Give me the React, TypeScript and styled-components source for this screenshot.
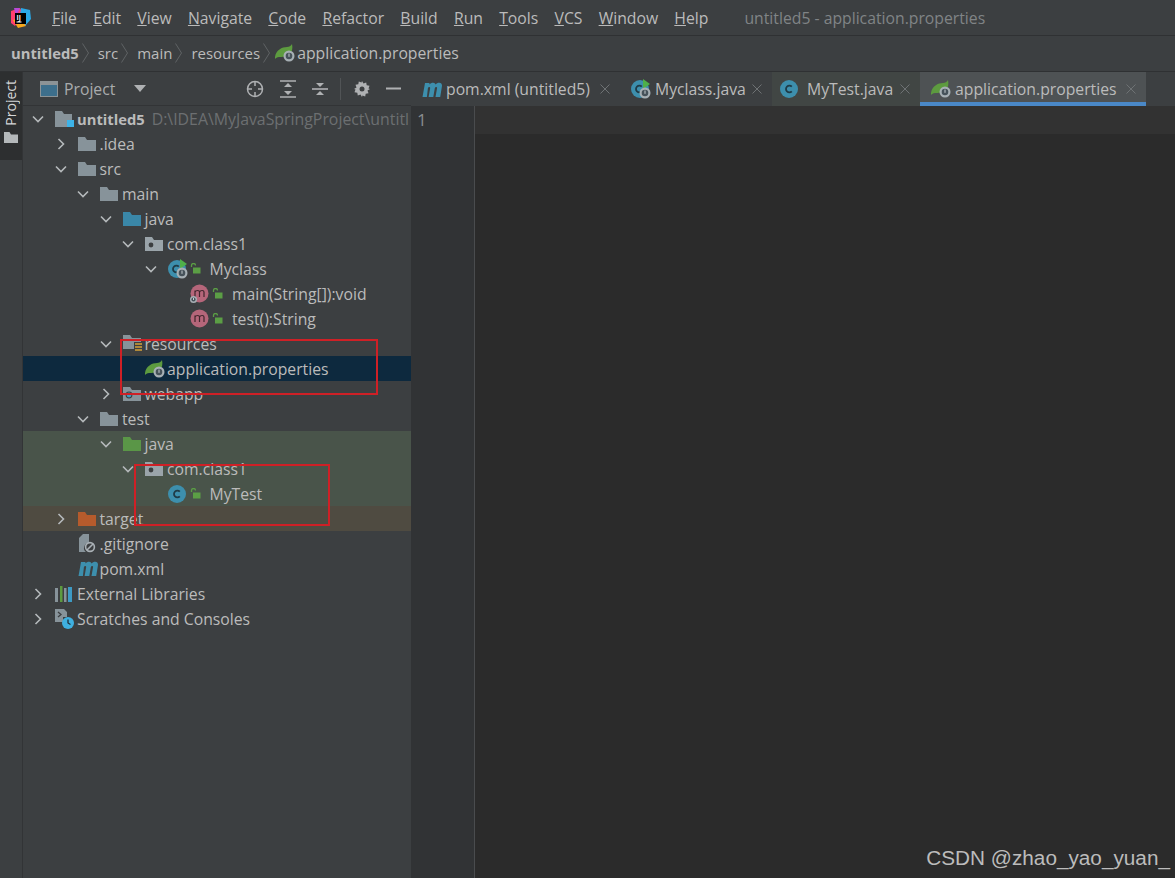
import React from 'react';
import styled, { createGlobalStyle } from 'styled-components';

const GlobalStyle = createGlobalStyle`
  html, body { margin: 0; padding: 0; background: #3c3f41; }
  body { font-family: "Open Sans", "Noto Sans", sans-serif; }
`;

const menuItems: [string, string][] = [
  ['F', 'ile'], ['E', 'dit'], ['V', 'iew'], ['N', 'avigate'], ['C', 'ode'], ['R', 'efactor'],
  ['B', 'uild'], ['R', 'un'], ['T', 'ools'], ['V', 'CS'], ['W', 'indow'], ['H', 'elp'],
];

const Folder = ({ color = '#87939a' }: { color?: string }) => (
  <svg width="18" height="14" viewBox="0 0 18 14">
    <path d="M0 0h7l2 3h9v11H0z" fill={color} />
  </svg>
);

const ModuleFolder = () => (
  <svg width="19" height="18" viewBox="0 0 19 18">
    <path d="M0 1h7l2 3h8v8h-5v5H0z" fill="#87939a" />
    <rect x="12" y="10" width="7" height="7" fill="#3db3e8" />
  </svg>
);

const PackageFolder = () => (
  <svg width="18" height="14" viewBox="0 0 18 14">
    <path d="M0 0h7l2 3h9v11H0z" fill="#9aa4aa" />
    <circle cx="6" cy="8" r="2.4" fill="#3c3f41" />
  </svg>
);

const ResourcesFolder = () => (
  <svg width="20" height="18" viewBox="0 0 20 18">
    <path d="M0 0h7l2 3h9v11H0z" fill="#87939a" />
    <rect x="11" y="7" width="9" height="11" fill="#3c3f41" />
    <path d="M12 9h7M12 12h7M12 15h7" stroke="#d5a238" strokeWidth="1.6" />
  </svg>
);

const WebFolder = () => (
  <svg width="18" height="14" viewBox="0 0 18 14">
    <path d="M0 0h7l2 3h9v11H0z" fill="#87939a" />
    <circle cx="6" cy="8" r="3.4" fill="#3c3f41" />
    <circle cx="6" cy="8" r="2.4" fill="#3d9ac4" />
  </svg>
);

const Gear = ({ x, y, r = 5 }: { x: number; y: number; r?: number }) => (
  <g>
    <circle cx={x} cy={y} r={r} fill="#a7b0b5" />
    <circle cx={x} cy={y} r={r * 0.6} fill="#46525a" />
    <path d={`M${x} ${y - r * 0.45}v${r * 0.6}`} stroke="#c4cbcf" strokeWidth="1" />
  </g>
);

const SpringLeaf = () => (
  <svg width="22" height="18" viewBox="0 0 22 18">
    <path d="M0 13C1 6 7 3 12 3c2 0 4-1 5-3 1 4 0 8-2 10-3 3-8 3-11 3-2 0-3 1-4 2z" fill="#5d9b3f" />
    <Gear x={14} y={12} r={5.5} />
  </svg>
);

const ClassBadge = () => (
  <svg width="18" height="18" viewBox="0 0 18 18">
    <circle cx="9" cy="9" r="9" fill="#3d8fad" />
    <path d="M11.800 6.600a3.400 3.400 0 1 0 0 4.800" fill="none" stroke="#1f3b47" strokeWidth="1.800" />
  </svg>
);

const SpringClass = () => (
  <svg width="22" height="20" viewBox="0 0 22 20">
    <circle cx="9" cy="10" r="9" fill="#3d8fad" />
    <path d="M10.800 7.600a3.400 3.400 0 1 0 0 4.800" fill="none" stroke="#1f3b47" strokeWidth="1.800" />
    <path d="M12 0l7 5-7 5z" fill="#4fb04a" />
    <Gear x={14} y={14} r={5.5} />
  </svg>
);

const MethodBadge = ({ gear }: { gear?: boolean }) => (
  <svg width="20" height="20" viewBox="0 0 20 20">
    <circle cx="9.500" cy="9.500" r="9" fill="#b5667a" />
    <path d="M5 13V6.500M5 8c1-2 4.500-2 4.500 0v5M9.500 8c1-2 4.500-2 4.500 0v5" fill="none" stroke="#40252c" strokeWidth="1.200" />
    {gear && <Gear x={3.500} y={15.500} r={3.500} />}
  </svg>
);

const Lock = () => (
  <svg width="11" height="11" viewBox="0 0 11 11">
    <path d="M1.500 4V2.500a2 2 0 0 1 4 0" fill="none" stroke="#5b9e45" strokeWidth="1.300" />
    <rect x="3" y="4.500" width="7.500" height="6" fill="#5b9e45" />
  </svg>
);

const MavenMark = () => (
  <svg width="20" height="15" viewBox="0 0 20 15">
    <path
      d="M0.500 15L3 1h4.500l-.2 1.500C8.500 1.200 10 .6 11.200.7c1.200.1 2 .8 2.300 1.800C14.700 1.200 16 .6 17.300.7c2 .2 3 1.500 2.600 3.700L18.200 15h-4.700l1.500-8.600c.2-1-.1-1.500-.7-1.500-.7 0-1.200.5-1.500 1.300L11.300 15H6.600l1.500-8.600c.2-1-.1-1.500-.7-1.500-.7 0-1.200.5-1.500 1.300L4.900 15z"
      fill="#3d8fad"
    />
  </svg>
);

const GitIgnoreIcon = () => (
  <svg width="18" height="19" viewBox="0 0 18 19">
    <path d="M1 4l4-4h6v9a5 5 0 0 0-3 9H1z" fill="#87939a" />
    <circle cx="12" cy="13" r="4.400" fill="none" stroke="#a9b0b5" strokeWidth="1.600" />
    <path d="M9 16l6-6" stroke="#a9b0b5" strokeWidth="1.600" />
  </svg>
);

const LibrariesIcon = () => (
  <svg width="18" height="16" viewBox="0 0 18 16">
    <rect x="0" y="2" width="3" height="14" fill="#87939a" />
    <rect x="5" y="0" width="2.500" height="16" fill="#5d9b3f" />
    <rect x="9" y="2" width="2.500" height="14" fill="#87939a" />
    <rect x="13" y="1" width="4" height="15" fill="#3d9ac4" />
  </svg>
);

const ScratchesIcon = () => (
  <svg width="20" height="20" viewBox="0 0 20 20">
    <path d="M0 0h9l3 3v5H8v5H0z" fill="#87939a" />
    <path d="M3 3l3 2.500L3 8" fill="none" stroke="#3c3f41" strokeWidth="1.300" />
    <circle cx="13" cy="14" r="6" fill="#3fb0e0" />
    <path d="M13 10.500V14l2.500 1.500" fill="none" stroke="#1d2f38" strokeWidth="1.300" />
  </svg>
);

const AppLogo = () => (
  <svg width="20" height="20" viewBox="0 0 20 20">
    <path d="M0 3l9-3 3 6-8 12-4-3z" fill="#ff3f6f" />
    <path d="M10 0l9 2 1 9-6 7-6-3z" fill="#2aa8e6" />
    <path d="M2 12l5 8 8-2-6-8z" fill="#f7a81c" />
    <path d="M3 0l6 0-4 9z" fill="#b84ad8" />
    <rect x="4" y="5" width="11" height="11" fill="#000" />
    <text x="5.500" y="11.500" fontSize="6.500" fontWeight="700" fontFamily="Open Sans" fill="#fff">IJ</text>
    <rect x="5.500" y="13.500" width="5" height="1" fill="#fff" />
  </svg>
);

const Chevron = ({ open }: { open: boolean }) => (
  <svg width="12" height="12" viewBox="0 0 12 12">
    <path d={open ? 'M1 3.500l5 5 5-5' : 'M3.500 1l5 5-5 5'} fill="none" stroke="#b5b9bb" strokeWidth="1.600" />
  </svg>
);

const CrumbArrow = () => (
  <CrumbArrowBox width="7" height="20" viewBox="0 0 7 20">
    <path d="M0.500 0.500l6 9.500-6 9.500" fill="none" stroke="#5f6365" strokeWidth="1" />
  </CrumbArrowBox>
);

const Close = () => (
  <svg width="10" height="10" viewBox="0 0 10 10">
    <path d="M0.500 0.500l9 9M9.500 0.500l-9 9" stroke="#6e7274" strokeWidth="1" />
  </svg>
);

type Row = {
  depth: number;
  open?: boolean;
  icon: React.ReactNode;
  label: string;
  hint?: string;
  bold?: boolean;
  tone?: 'selected' | 'test' | 'excluded';
  locked?: boolean;
};

const rows: Row[] = [
  { depth: 0, open: true, icon: <ModuleFolder />, label: 'untitled5', bold: true, hint: 'D:\\IDEA\\MyJavaSpringProject\\untitl' },
  { depth: 1, open: false, icon: <Folder />, label: '.idea' },
  { depth: 1, open: true, icon: <Folder />, label: 'src' },
  { depth: 2, open: true, icon: <Folder />, label: 'main' },
  { depth: 3, open: true, icon: <Folder color="#3a87a8" />, label: 'java' },
  { depth: 4, open: true, icon: <PackageFolder />, label: 'com.class1' },
  { depth: 5, open: true, icon: <SpringClass />, label: 'Myclass', locked: true },
  { depth: 6, icon: <MethodBadge gear />, label: 'main(String[]):void', locked: true },
  { depth: 6, icon: <MethodBadge />, label: 'test():String', locked: true },
  { depth: 3, open: true, icon: <ResourcesFolder />, label: 'resources' },
  { depth: 4, icon: <SpringLeaf />, label: 'application.properties', tone: 'selected' },
  { depth: 3, open: false, icon: <WebFolder />, label: 'webapp' },
  { depth: 2, open: true, icon: <Folder />, label: 'test' },
  { depth: 3, open: true, icon: <Folder color="#5a9647" />, label: 'java', tone: 'test' },
  { depth: 4, open: true, icon: <PackageFolder />, label: 'com.class1', tone: 'test' },
  { depth: 5, icon: <ClassBadge />, label: 'MyTest', tone: 'test', locked: true },
  { depth: 1, open: false, icon: <Folder color="#b65b2c" />, label: 'target', tone: 'excluded' },
  { depth: 1, icon: <GitIgnoreIcon />, label: '.gitignore' },
  { depth: 1, icon: <MavenMark />, label: 'pom.xml' },
  { depth: 0, open: false, icon: <LibrariesIcon />, label: 'External Libraries' },
  { depth: 0, open: false, icon: <ScratchesIcon />, label: 'Scratches and Consoles' },
];

const tabs = [
  { icon: <MavenMark />, label: 'pom.xml (untitled5)', width: 209 },
  { icon: <SpringClass />, label: 'Myclass.java', width: 152 },
  { icon: <ClassBadge />, label: 'MyTest.java', width: 148, tone: 'test' as const },
  { icon: <SpringLeaf />, label: 'application.properties', width: 226, tone: 'active' as const },
];

const App = () => (
  <Page>
    <GlobalStyle />
    <MenuBar>
      <LogoSlot><AppLogo /></LogoSlot>
      <Menu>
        {menuItems.map(([key, rest]) => (
          <MenuItem key={key + rest}><u>{key}</u>{rest}</MenuItem>
        ))}
      </Menu>
      <WindowTitle>untitled5 - application.properties</WindowTitle>
    </MenuBar>
    <Breadcrumbs>
      <Crumb $bold>untitled5</Crumb><CrumbArrow />
      <Crumb>src</Crumb><CrumbArrow />
      <Crumb>main</Crumb><CrumbArrow />
      <Crumb>resources</Crumb><CrumbArrow />
      <CrumbIcon><SpringLeaf /></CrumbIcon>
      <FileCrumb>application.properties</FileCrumb>
    </Breadcrumbs>
    <Workspace>
      <SideStrip>
        <SideButton>
          <SideLabel>Project</SideLabel>
          <Folder color="#b4b8ba" />
        </SideButton>
      </SideStrip>
      <ProjectPanel>
        <PanelHeader>
          <PanelTitle>
            <svg width="18" height="16" viewBox="0 0 18 16">
              <rect x="0.500" y="0.500" width="17" height="15" fill="#3d6f8c" stroke="#8c9396" />
              <rect x="1" y="1" width="16" height="3" fill="#8c9396" />
            </svg>
            <span>Project</span>
            <svg width="12" height="7" viewBox="0 0 12 7"><path d="M0 0h12L6 7z" fill="#afb1b3" /></svg>
          </PanelTitle>
          <PanelTools>
            <svg width="18" height="18" viewBox="0 0 18 18">
              <circle cx="9" cy="9" r="7.500" fill="none" stroke="#afb1b3" strokeWidth="1.500" />
              <path d="M9 1v5M9 12v5M1 9h5M12 9h5" stroke="#afb1b3" strokeWidth="1.500" />
            </svg>
            <svg width="16" height="18" viewBox="0 0 16 18">
              <path d="M0 1h16M0 17h16" stroke="#afb1b3" strokeWidth="1.600" />
              <path d="M8 3l4 4H4zM8 15l4-4H4z" fill="#afb1b3" />
            </svg>
            <svg width="16" height="18" viewBox="0 0 16 18">
              <path d="M0 9h16" stroke="#afb1b3" strokeWidth="1.600" />
              <path d="M8 7l4-4H4zM8 11l4 4H4z" fill="#afb1b3" />
            </svg>
            <ToolDivider />
            <svg width="16" height="16" viewBox="0 0 16 16">
              <path d="M8 0l1.500 2.500 2.700-1 .5 2.800 2.800.5-1 2.700L16 8l-2.500 1.500 1 2.700-2.800.5-.5 2.800-2.700-1L8 16l-1.500-2.500-2.700 1-.5-2.800-2.800-.5 1-2.700L0 8l2.500-1.500-1-2.700 2.800-.5.5-2.800 2.700 1z" fill="#afb1b3" />
              <circle cx="8" cy="8" r="2.500" fill="#3c3f41" />
            </svg>
            <svg width="15" height="3" viewBox="0 0 15 3"><rect width="15" height="2" y="0.500" fill="#afb1b3" /></svg>
          </PanelTools>
        </PanelHeader>
        <Tree>
          {rows.map((row, i) => (
            <TreeRow key={i} $depth={row.depth} $tone={row.tone}>
              <ArrowSlot>{row.open !== undefined && <Chevron open={row.open} />}</ArrowSlot>
              <IconSlot>{row.icon}</IconSlot>
              {row.locked && <LockSlot><Lock /></LockSlot>}
              <RowLabel $bold={row.bold}>{row.label}</RowLabel>
              {row.hint && <RowHint>{row.hint}</RowHint>}
            </TreeRow>
          ))}
        </Tree>
      </ProjectPanel>
      <EditorArea>
        <TabBar>
          {tabs.map((tab) => (
            <Tab key={tab.label} $tone={tab.tone} $width={tab.width}>
              <TabIcon $wide={tab.tone === 'test'}>{tab.icon}</TabIcon>
              <TabLabel>{tab.label}</TabLabel>
              <Close />
            </Tab>
          ))}
        </TabBar>
        <EditorBody>
          <Gutter><LineNumber>1</LineNumber></Gutter>
          <CodePane><CurrentLine /></CodePane>
        </EditorBody>
      </EditorArea>
    </Workspace>
    <Annotation $left={120} $top={339} $width={258} $height={56} />
    <Annotation $left={134} $top={464} $width={196} $height={62} />
    <Watermark>CSDN @zhao_yao_yuan_</Watermark>
  </Page>
);

export default App;

const Page = styled.div`
  position: relative;
  width: 1175px;
  height: 878px;
  overflow: hidden;
  display: flex;
  flex-direction: column;
  background: #3c3f41;
  color: #bbbbbb;
  font-size: 15.75px;
`;

const MenuBar = styled.div`
  height: 35px;
  flex: none;
  display: flex;
  align-items: center;
  border-bottom: 1px solid #2f3133;
`;

const LogoSlot = styled.div`
  width: 52px;
  padding-left: 11px;
  box-sizing: border-box;
  display: flex;
`;

const Menu = styled.div`
  display: flex;
  gap: 16.2px;
`;

const MenuItem = styled.span`
  color: #bbbbbb;
`;

const WindowTitle = styled.span`
  margin-left: 36px;
  color: #808486;
`;

const Breadcrumbs = styled.div`
  height: 33px;
  padding: 0 0 2px 11px;
  flex: none;
  display: flex;
  align-items: center;
  border-bottom: 1px solid #2f3133;
`;

const Crumb = styled.span<{ $bold?: boolean }>`
  font-weight: ${(p) => (p.$bold ? 700 : 400)};
  font-size: ${(p) => (p.$bold ? '14.75px' : '15px')};
  color: #bbbbbb;
`;

const FileCrumb = styled.span`
  color: #bbbbbb;
`;

const CrumbIcon = styled.span`
  display: flex;
  margin-left: -4px;
`;

const CrumbArrowBox = styled.svg`
  flex: none;
  margin: 0 9px 0 3px;
`;

const Workspace = styled.div`
  flex: 1;
  display: flex;
  min-height: 0;
`;

const SideStrip = styled.div`
  width: 23px;
  flex: none;
  border-right: 1px solid #323436;
  box-sizing: border-box;
`;

const SideButton = styled.div`
  height: 88px;
  background: #2d2f30;
  display: flex;
  flex-direction: column;
  align-items: center;
  gap: 6px;
  padding-top: 8px;
  box-sizing: border-box;
  svg { width: 14px; height: 11px; }
`;

const SideLabel = styled.span`
  writing-mode: vertical-rl;
  transform: rotate(180deg);
  font-size: 14px;
  line-height: 20px;
  color: #d4d6d7;
`;

const ProjectPanel = styled.div`
  width: 388px;
  flex: none;
  display: flex;
  flex-direction: column;
`;

const PanelHeader = styled.div`
  height: 33px;
  flex: none;
  display: flex;
  align-items: center;
  justify-content: space-between;
  padding: 0 10px 0 17px;
  border-bottom: 1px solid #323436;
`;

const PanelTitle = styled.div`
  display: flex;
  align-items: center;
  gap: 6px;
  color: #a9abad;
  svg:last-child { margin-left: 13px; }
`;

const PanelTools = styled.div`
  display: flex;
  align-items: center;
  gap: 16px;
`;

const ToolDivider = styled.span`
  width: 1px;
  height: 22px;
  background: #515456;
  margin: 0 -3px 0 -4px;
`;

const Tree = styled.div`
  display: flex;
  flex-direction: column;
`;

const toneColors = { selected: '#0d293e', test: '#49544a', excluded: '#4f4b41' };

const TreeRow = styled.div<{ $depth: number; $tone?: keyof typeof toneColors }>`
  height: 25px;
  display: flex;
  align-items: center;
  padding-left: ${(p) => 9 + p.$depth * 22.5}px;
  background: ${(p) => (p.$tone ? toneColors[p.$tone] : 'transparent')};
  white-space: nowrap;
`;

const ArrowSlot = styled.span`
  width: 23px;
  flex: none;
  display: flex;
`;

const IconSlot = styled.span`
  width: 22px;
  flex: none;
  display: flex;
  align-items: center;
`;

const LockSlot = styled.span`
  width: 20px;
  flex: none;
  display: flex;
`;

const RowLabel = styled.span<{ $bold?: boolean }>`
  font-weight: ${(p) => (p.$bold ? 700 : 400)};
  font-size: ${(p) => (p.$bold ? '14.75px' : 'inherit')};
  color: #bbbbbb;
`;

const RowHint = styled.span`
  margin-left: 7px;
  color: #6c6f71;
  font-size: 15.85px;
`;

const EditorArea = styled.div`
  flex: 1;
  display: flex;
  flex-direction: column;
  min-width: 0;
  background: #2b2b2b;
`;

const TabBar = styled.div`
  height: 34px;
  flex: none;
  display: flex;
  background: #3c3f41;
`;

const Tab = styled.div<{ $tone?: 'test' | 'active'; $width: number }>`
  display: flex;
  align-items: center;
  width: ${(p) => p.$width}px;
  flex: none;
  height: 34px;
  box-sizing: border-box;
  padding: ${(p) => (p.$tone === 'active' ? '4px 10px 0 11px' : p.$tone === 'test' ? '0 10px 0 8px' : '0 10px 0 11px')};
  background: ${(p) => (p.$tone === 'active' ? '#4e5254' : p.$tone === 'test' ? '#414644' : 'transparent')};
  border-bottom: ${(p) => (p.$tone === 'active' ? '4px solid #4a88c7' : 'none')};
`;

const TabIcon = styled.span<{ $wide?: boolean }>`
  width: ${(p) => (p.$wide ? 27 : 24)}px;
  flex: none;
  display: flex;
`;

const TabLabel = styled.span`
  flex: 1;
  white-space: nowrap;
  color: #bbbbbb;
`;

const EditorBody = styled.div`
  flex: 1;
  display: flex;
`;

const Gutter = styled.div`
  width: 64px;
  flex: none;
  background: #313335;
  border-right: 1px solid #4a4c4e;
  box-sizing: border-box;
  padding: 1px 0 0 6px;
`;

const LineNumber = styled.span`
  color: #8a8d8f;
  font-size: 17px;
  line-height: 26px;
`;

const CodePane = styled.div`
  flex: 1;
`;

const CurrentLine = styled.div`
  height: 28px;
  background: #323232;
`;

const Annotation = styled.div<{ $left: number; $top: number; $width: number; $height: number }>`
  position: absolute;
  left: ${(p) => p.$left}px;
  top: ${(p) => p.$top}px;
  width: ${(p) => p.$width}px;
  height: ${(p) => p.$height}px;
  box-sizing: border-box;
  border: 2px solid #cf2026;
  pointer-events: none;
`;

const Watermark = styled.div`
  position: absolute;
  right: 5px;
  bottom: 8px;
  font-family: "Liberation Sans", Arial, sans-serif;
  font-size: 20.75px;
  color: #bcbcbc;
`;
